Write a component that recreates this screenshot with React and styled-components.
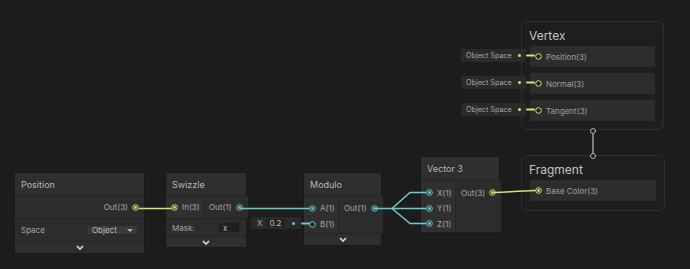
import React from 'react';
import styled, { createGlobalStyle } from 'styled-components';

const YELLOW = '#dede78';
const CYAN = '#6ccaca';

const GlobalStyle = createGlobalStyle`
  html, body {
    margin: 0;
    padding: 0;
    background: #1c1c1c;
  }
  body {
    font-family: Inter, "Noto Sans", sans-serif;
  }
`;

const Canvas = styled.div`
  position: relative;
  width: 690px;
  height: 269px;
  overflow: hidden;
  background: #1c1c1c;
`;

const Node = styled.div`
  position: absolute;
  left: ${(p) => p.$x}px;
  top: ${(p) => p.$y}px;
  width: ${(p) => p.$w}px;
  display: flex;
  flex-direction: column;
  background: #2b2b2b;
  box-shadow: 0 0 0 1px #1a1a1a;
`;

const Header = styled.div`
  height: ${(p) => p.$h || 23}px;
  display: flex;
  align-items: center;
  padding-left: 6px;
  font-size: 9px;
  color: #b6b6b6;
  background: #2f2f2f;
  border-bottom: 1px solid #242424;
  box-sizing: border-box;
`;

const Body = styled.div`
  display: flex;
  height: ${(p) => p.$h}px;
  border-bottom: 1px solid #242424;
  box-sizing: border-box;
`;

const InputCol = styled.div`
  width: ${(p) => p.$w}px;
  display: flex;
  flex-direction: column;
  padding-top: ${(p) => p.$pad || 0}px;
  background: #303030;
  border-right: 1px solid #252525;
  box-sizing: border-box;
`;

const OutputCol = styled.div`
  flex: 1;
  display: flex;
  flex-direction: column;
  align-items: flex-end;
  padding-top: ${(p) => p.$pad || 0}px;
  background: #2c2c2c;
`;

const PortRow = styled.div`
  height: ${(p) => p.$h}px;
  display: flex;
  align-items: center;
  gap: 4px;
  padding: 0 5px;
  font-size: 8px;
  color: #a9a9a9;
  white-space: nowrap;
`;

const SettingRow = styled.div`
  height: ${(p) => p.$h}px;
  display: flex;
  align-items: center;
  justify-content: space-between;
  padding: 0 6px;
  font-size: 8px;
  color: #a6a6a6;
  background: #2c2c2c;
  border-bottom: 1px solid #242424;
  box-sizing: border-box;
`;

const Dropdown = styled.div`
  width: 51px;
  height: 10px;
  display: flex;
  align-items: center;
  justify-content: space-between;
  padding: 0 4px;
  box-sizing: border-box;
  background: #393939;
  border: 1px solid #2a2a2a;
  border-radius: 1px;
  color: #bdbdbd;
  font-size: 8px;
`;

const Caret = styled.span`
  width: 0;
  height: 0;
  border-left: 3px solid transparent;
  border-right: 3px solid transparent;
  border-top: 3px solid #b0b0b0;
`;

const TextField = styled.div`
  width: 22px;
  height: 11px;
  display: flex;
  align-items: center;
  padding-left: 4px;
  box-sizing: border-box;
  background: #1f1f1f;
  border: 1px solid #2a2a2a;
  border-radius: 2px;
  color: #bdbdbd;
  font-size: 8px;
`;

const Footer = styled.div`
  height: ${(p) => p.$h}px;
  display: flex;
  align-items: center;
  justify-content: center;
  background: #2f2f2f;
`;

const InlineValue = styled.div`
  position: absolute;
  left: ${(p) => p.$x}px;
  top: ${(p) => p.$y}px;
  width: ${(p) => p.$w}px;
  height: 12px;
  display: flex;
  align-items: center;
  gap: 4px;
  padding-left: 6px;
  box-sizing: border-box;
  background: #2a2a2a;
  font-size: 8px;
  color: #a9a9a9;
`;

const ValueBox = styled.span`
  width: 19px;
  height: 8px;
  display: flex;
  align-items: center;
  padding-left: 3px;
  box-sizing: border-box;
  background: #222;
  border-radius: 1px;
  color: #bdbdbd;
`;

const Dot = styled.span`
  flex: none;
  width: 3px;
  height: 3px;
  border-radius: 50%;
  background: ${(p) => p.$c};
  margin-left: auto;
  margin-right: ${(p) => p.$mr}px;
`;

const Context = styled.div`
  position: absolute;
  left: ${(p) => p.$x}px;
  top: ${(p) => p.$y}px;
  width: ${(p) => p.$w}px;
  height: ${(p) => p.$h}px;
  box-sizing: border-box;
  border: 1px solid #2f2f2f;
  border-radius: 6px;
  background: #1e1e1e;
  padding: 4px 8px 0 7px;
  display: flex;
  flex-direction: column;
`;

const ContextTitle = styled.div`
  height: 19px;
  display: flex;
  align-items: center;
  font-size: 12px;
  color: #c4c4c4;
  margin-bottom: 1px;
`;

const BlockList = styled.div`
  display: flex;
  flex-direction: column;
  gap: 6px;
  padding-left: 1px;
`;

const Block = styled.div`
  height: 21px;
  display: flex;
  align-items: center;
  gap: 4px;
  padding-left: 5px;
  background: #2d2d2d;
  font-size: 8px;
  color: #a0a0a0;
`;

const SpaceTag = styled.div`
  position: absolute;
  left: ${(p) => p.$x}px;
  top: ${(p) => p.$y}px;
  width: 65px;
  height: 13px;
  display: flex;
  align-items: center;
  padding-left: 5px;
  box-sizing: border-box;
  background: #2a2a2a;
  font-size: 7.2px;
  color: #a8a8a8;
  white-space: nowrap;
`;

const Wires = styled.svg`
  position: absolute;
  left: 0;
  top: 0;
  pointer-events: none;
`;

const Port = ({ color, filled = true }) => (
  <svg width="7" height="7" viewBox="0 0 7 7" style={{ flex: 'none' }}>
    <circle cx="3.5" cy="3.5" r="2.8" fill="#232323" stroke={color} strokeWidth="1" />
    {filled && <circle cx="3.5" cy="3.5" r="1.4" fill={color} />}
  </svg>
);

const Chevron = () => (
  <svg width="8" height="5" viewBox="0 0 8 5">
    <path d="M1 1 L4 4 L7 1" fill="none" stroke="#e4e4e4" strokeWidth="1.5" />
  </svg>
);

const App = () => (
  <>
    <GlobalStyle />
    <Canvas>
      {/* Position */}
      <Node $x={15} $y={173} $w={129}>
        <Header>Position</Header>
        <Body $h={23}>
          <OutputCol>
            <PortRow $h={22}>
              Out(3)
              <Port color={YELLOW} />
            </PortRow>
          </OutputCol>
        </Body>
        <SettingRow $h={23}>
          Space
          <Dropdown>
            Object
            <Caret />
          </Dropdown>
        </SettingRow>
        <Footer $h={11}>
          <Chevron />
        </Footer>
      </Node>

      {/* Swizzle */}
      <Node $x={166} $y={173} $w={80}>
        <Header>Swizzle</Header>
        <Body $h={23}>
          <InputCol $w={38}>
            <PortRow $h={22}>
              <Port color={YELLOW} />
              In(3)
            </PortRow>
          </InputCol>
          <OutputCol>
            <PortRow $h={22}>
              Out(1)
              <Port color={CYAN} />
            </PortRow>
          </OutputCol>
        </Body>
        <SettingRow $h={18}>
          Mask:
          <TextField>x</TextField>
        </SettingRow>
        <Footer $h={10}>
          <Chevron />
        </Footer>
      </Node>

      <InlineValue $x={251} $y={217} $w={50}>
        X
        <ValueBox>0.2</ValueBox>
        <Dot $c={CYAN} $mr={6} />
      </InlineValue>

      {/* Modulo */}
      <Node $x={304} $y={173} $w={77}>
        <Header>Modulo</Header>
        <Body $h={38}>
          <InputCol $w={35} $pad={4}>
            <PortRow $h={16}>
              <Port color={CYAN} />
              A(1)
            </PortRow>
            <PortRow $h={16}>
              <Port color={CYAN} filled={false} />
              B(1)
            </PortRow>
          </InputCol>
          <OutputCol $pad={4}>
            <PortRow $h={16}>
              Out(1)
              <Port color={CYAN} />
            </PortRow>
          </OutputCol>
        </Body>
        <Footer $h={11}>
          <Chevron />
        </Footer>
      </Node>

      {/* Vector 3 */}
      <Node $x={421} $y={157} $w={78}>
        <Header $h={24}>Vector 3</Header>
        <Body $h={52}>
          <InputCol $w={35} $pad={4}>
            <PortRow $h={15.5}>
              <Port color={CYAN} />
              X(1)
            </PortRow>
            <PortRow $h={15.5}>
              <Port color={CYAN} />
              Y(1)
            </PortRow>
            <PortRow $h={15.5}>
              <Port color={CYAN} />
              Z(1)
            </PortRow>
          </InputCol>
          <OutputCol $pad={4}>
            <PortRow $h={15.5}>
              Out(3)
              <Port color={YELLOW} />
            </PortRow>
          </OutputCol>
        </Body>
      </Node>

      {/* Vertex context */}
      <Context $x={521} $y={21} $w={143} $h={109}>
        <ContextTitle>Vertex</ContextTitle>
        <BlockList>
          {['Position(3)', 'Normal(3)', 'Tangent(3)'].map((label) => (
            <Block key={label}>
              <Port color={YELLOW} filled={false} />
              {label}
            </Block>
          ))}
        </BlockList>
      </Context>

      {[49, 76, 103].map((y) => (
        <SpaceTag key={y} $x={461} $y={y}>
          Object Space
          <Dot $c={YELLOW} $mr={5} />
        </SpaceTag>
      ))}

      {/* Fragment context */}
      <Context $x={521} $y={155} $w={144} $h={56}>
        <ContextTitle>Fragment</ContextTitle>
        <BlockList>
          <Block>
            <Port color={YELLOW} />
            Base Color(3)
          </Block>
        </BlockList>
      </Context>

      <Wires width="690" height="269" viewBox="0 0 690 269">
        <g fill="none" strokeLinecap="round">
          <line x1="139.5" y1="208.5" x2="171" y2="208.5" stroke={YELLOW} strokeWidth="1.6" />
          <line x1="241" y1="208.5" x2="309" y2="208.5" stroke={CYAN} strokeWidth="1.6" />
          <line x1="302" y1="223.5" x2="309" y2="223.5" stroke={CYAN} strokeWidth="2" />
          <path
            d="M376 208.5 H392 M392 208.5 L410 192.5 H426 M392 208.5 H426 M392 208.5 L410 223.5 H426"
            stroke={CYAN}
            strokeWidth="1.6"
            strokeLinejoin="round"
          />
          <path d="M494.5 192.5 C512 192, 516 191, 535 190.5" stroke={YELLOW} strokeWidth="1.6" />
          {[55.5, 82.5, 109.5].map((y) => (
            <line key={y} x1="527" y1={y} x2="534" y2={y} stroke={YELLOW} strokeWidth="2" />
          ))}
          <line x1="593" y1="133.5" x2="593" y2="153.5" stroke="#b4b4b4" strokeWidth="1.3" />
          <circle cx="593" cy="131" r="2.5" fill="#1c1c1c" stroke="#b4b4b4" strokeWidth="1" />
          <circle cx="593" cy="156" r="2.5" fill="#1c1c1c" stroke="#b4b4b4" strokeWidth="1" />
        </g>
      </Wires>
    </Canvas>
  </>
);

export default App;
